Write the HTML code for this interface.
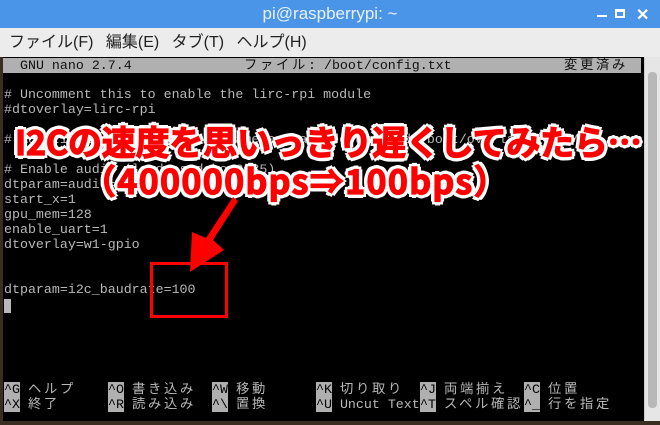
<!DOCTYPE html>
<html><head><meta charset="utf-8"><style>
*{margin:0;padding:0;box-sizing:border-box}
body{width:660px;height:425px;overflow:hidden;background:#3a2e22;position:relative;font-family:"Liberation Sans","Noto Sans CJK JP",sans-serif}
.title{position:absolute;left:0;top:0;width:660px;height:28px;background:#4b95e8;color:#e8f0fb;font-size:17px;text-align:center;line-height:28px}
.menu{position:absolute;left:0;top:28px;width:660px;height:29px;background:#ececec;font-size:16px;line-height:29px;padding-left:9px;color:#222;word-spacing:8px}
.term{position:absolute;left:3px;top:57px;width:641px;height:364px;background:#000;font-family:"Liberation Mono","Noto Sans CJK JP",monospace;font-size:13.3px;color:#b8b8b8;line-height:15px}
.status{position:absolute;left:0;top:1px;width:638px;height:15px;background:#b0b0b0;color:#111}
.status span,.b span{position:absolute;white-space:pre}
.j{letter-spacing:2.7px}
.l{position:absolute;left:1px;white-space:pre}
.k{background:#b0b0b0;color:#000}
.sb{position:absolute;left:644px;top:57px;width:16px;height:364px;background:#e6e6e6;border-left:1px solid #ccc}
.th{position:absolute;left:648px;top:72px;width:9px;height:336px;background:#b8b8b8;border-radius:4px}
.cur{position:absolute;left:1px;top:242px;width:7px;height:14px;background:#b8b8b8}
.ov{position:absolute;font-weight:bold;color:#f00;-webkit-text-stroke:1.2px #f00;font-family:"Noto Sans CJK JP","Liberation Sans",sans-serif;white-space:nowrap;font-size:34px;line-height:40px;
text-shadow:3px 0 #fff,-3px 0 #fff,0 3px #fff,0 -3px #fff,2px 2px #fff,-2px -2px #fff,2px -2px #fff,-2px 2px #fff,4px 0 #fff,-4px 0 #fff,0 4px #fff,0 -4px #fff,3px 3px #fff,-3px -3px #fff,3px -3px #fff,-3px 3px #fff}
</style></head><body>
<div class="title">pi@raspberrypi: ~</div>
<div style="position:absolute;left:597px;top:15px;width:10px;height:2px;background:#fff"></div>
<div style="position:absolute;left:615px;top:9px;width:10px;height:9px;border:2px solid #fff;border-top-width:3px"></div>
<div style="position:absolute;left:636px;top:5px;color:#fff;font-size:16px;font-weight:bold">✕</div>
<div class="menu">ファイル(F) 編集(E) タブ(T) ヘルプ(H)</div>
<div class="term">
<div class="status"><span style="left:17px">GNU nano 2.7.4</span><span style="left:241px"><span class="j" style="position:static">ファイル</span>: /boot/config.txt</span><span class="j" style="left:561px">変更済み</span></div>
<div class="l" style="top:30px"># Uncomment this to enable the lirc-rpi module</div>
<div class="l" style="top:45px">#dtoverlay=lirc-rpi</div>
<div class="l" style="top:75px"># Additional overlays and parameters are documented /boot/overlays/README</div>
<div class="l" style="top:105px"># Enable audio (loads snd_bcm2835)</div>
<div class="l" style="top:120px">dtparam=audio=on</div>
<div class="l" style="top:135px">start_x=1</div>
<div class="l" style="top:150px">gpu_mem=128</div>
<div class="l" style="top:165px">enable_uart=1</div>
<div class="l" style="top:180px">dtoverlay=w1-gpio</div>
<div class="l" style="top:225px">dtparam=i2c_baudrate=100</div>
<div class="cur"></div>
<div class="b" style="position:absolute;left:0;top:325px;width:641px;height:15px">
<span style="left:1px"><span class="k" style="position:static">^G</span> <span class="j" style="position:static">ヘルプ</span></span>
<span style="left:105px"><span class="k" style="position:static">^O</span> <span class="j" style="position:static">書き込み</span></span>
<span style="left:209px"><span class="k" style="position:static">^W</span> <span class="j" style="position:static">移動</span></span>
<span style="left:313px"><span class="k" style="position:static">^K</span> <span class="j" style="position:static">切り取り</span></span>
<span style="left:417px"><span class="k" style="position:static">^J</span> <span class="j" style="position:static">両端揃え</span></span>
<span style="left:521px"><span class="k" style="position:static">^C</span> <span class="j" style="position:static">位置</span></span>
</div>
<div class="b" style="position:absolute;left:0;top:340px;width:641px;height:15px">
<span style="left:1px"><span class="k" style="position:static">^X</span> <span class="j" style="position:static">終了</span></span>
<span style="left:105px"><span class="k" style="position:static">^R</span> <span class="j" style="position:static">読み込み</span></span>
<span style="left:209px"><span class="k" style="position:static">^\</span> <span class="j" style="position:static">置換</span></span>
<span style="left:313px"><span class="k" style="position:static">^U</span> Uncut Text</span>
<span style="left:417px"><span class="k" style="position:static">^T</span> <span class="j" style="position:static">スペル確認</span></span>
<span style="left:521px"><span class="k" style="position:static">^_</span> <span class="j" style="position:static">行を指定</span></span>
</div>
</div>
<div class="sb"></div><div class="th"></div>
<div class="ov" style="left:15px;top:121px;letter-spacing:-0.2px">I2Cの速度を思いっきり遅くしてみたら…</div>
<div class="ov" style="left:82px;top:160px;letter-spacing:1.3px">（400000bps⇒100bps）</div>
<svg style="position:absolute;left:0;top:0" width="660" height="425">
<polygon points="233,197 238,201 213,240 224,250 190,272 192,232 206,238" fill="#f00"/>
<rect x="151.5" y="263.5" width="75" height="53" fill="none" stroke="#f00" stroke-width="3"/>
</svg>
</body></html>
